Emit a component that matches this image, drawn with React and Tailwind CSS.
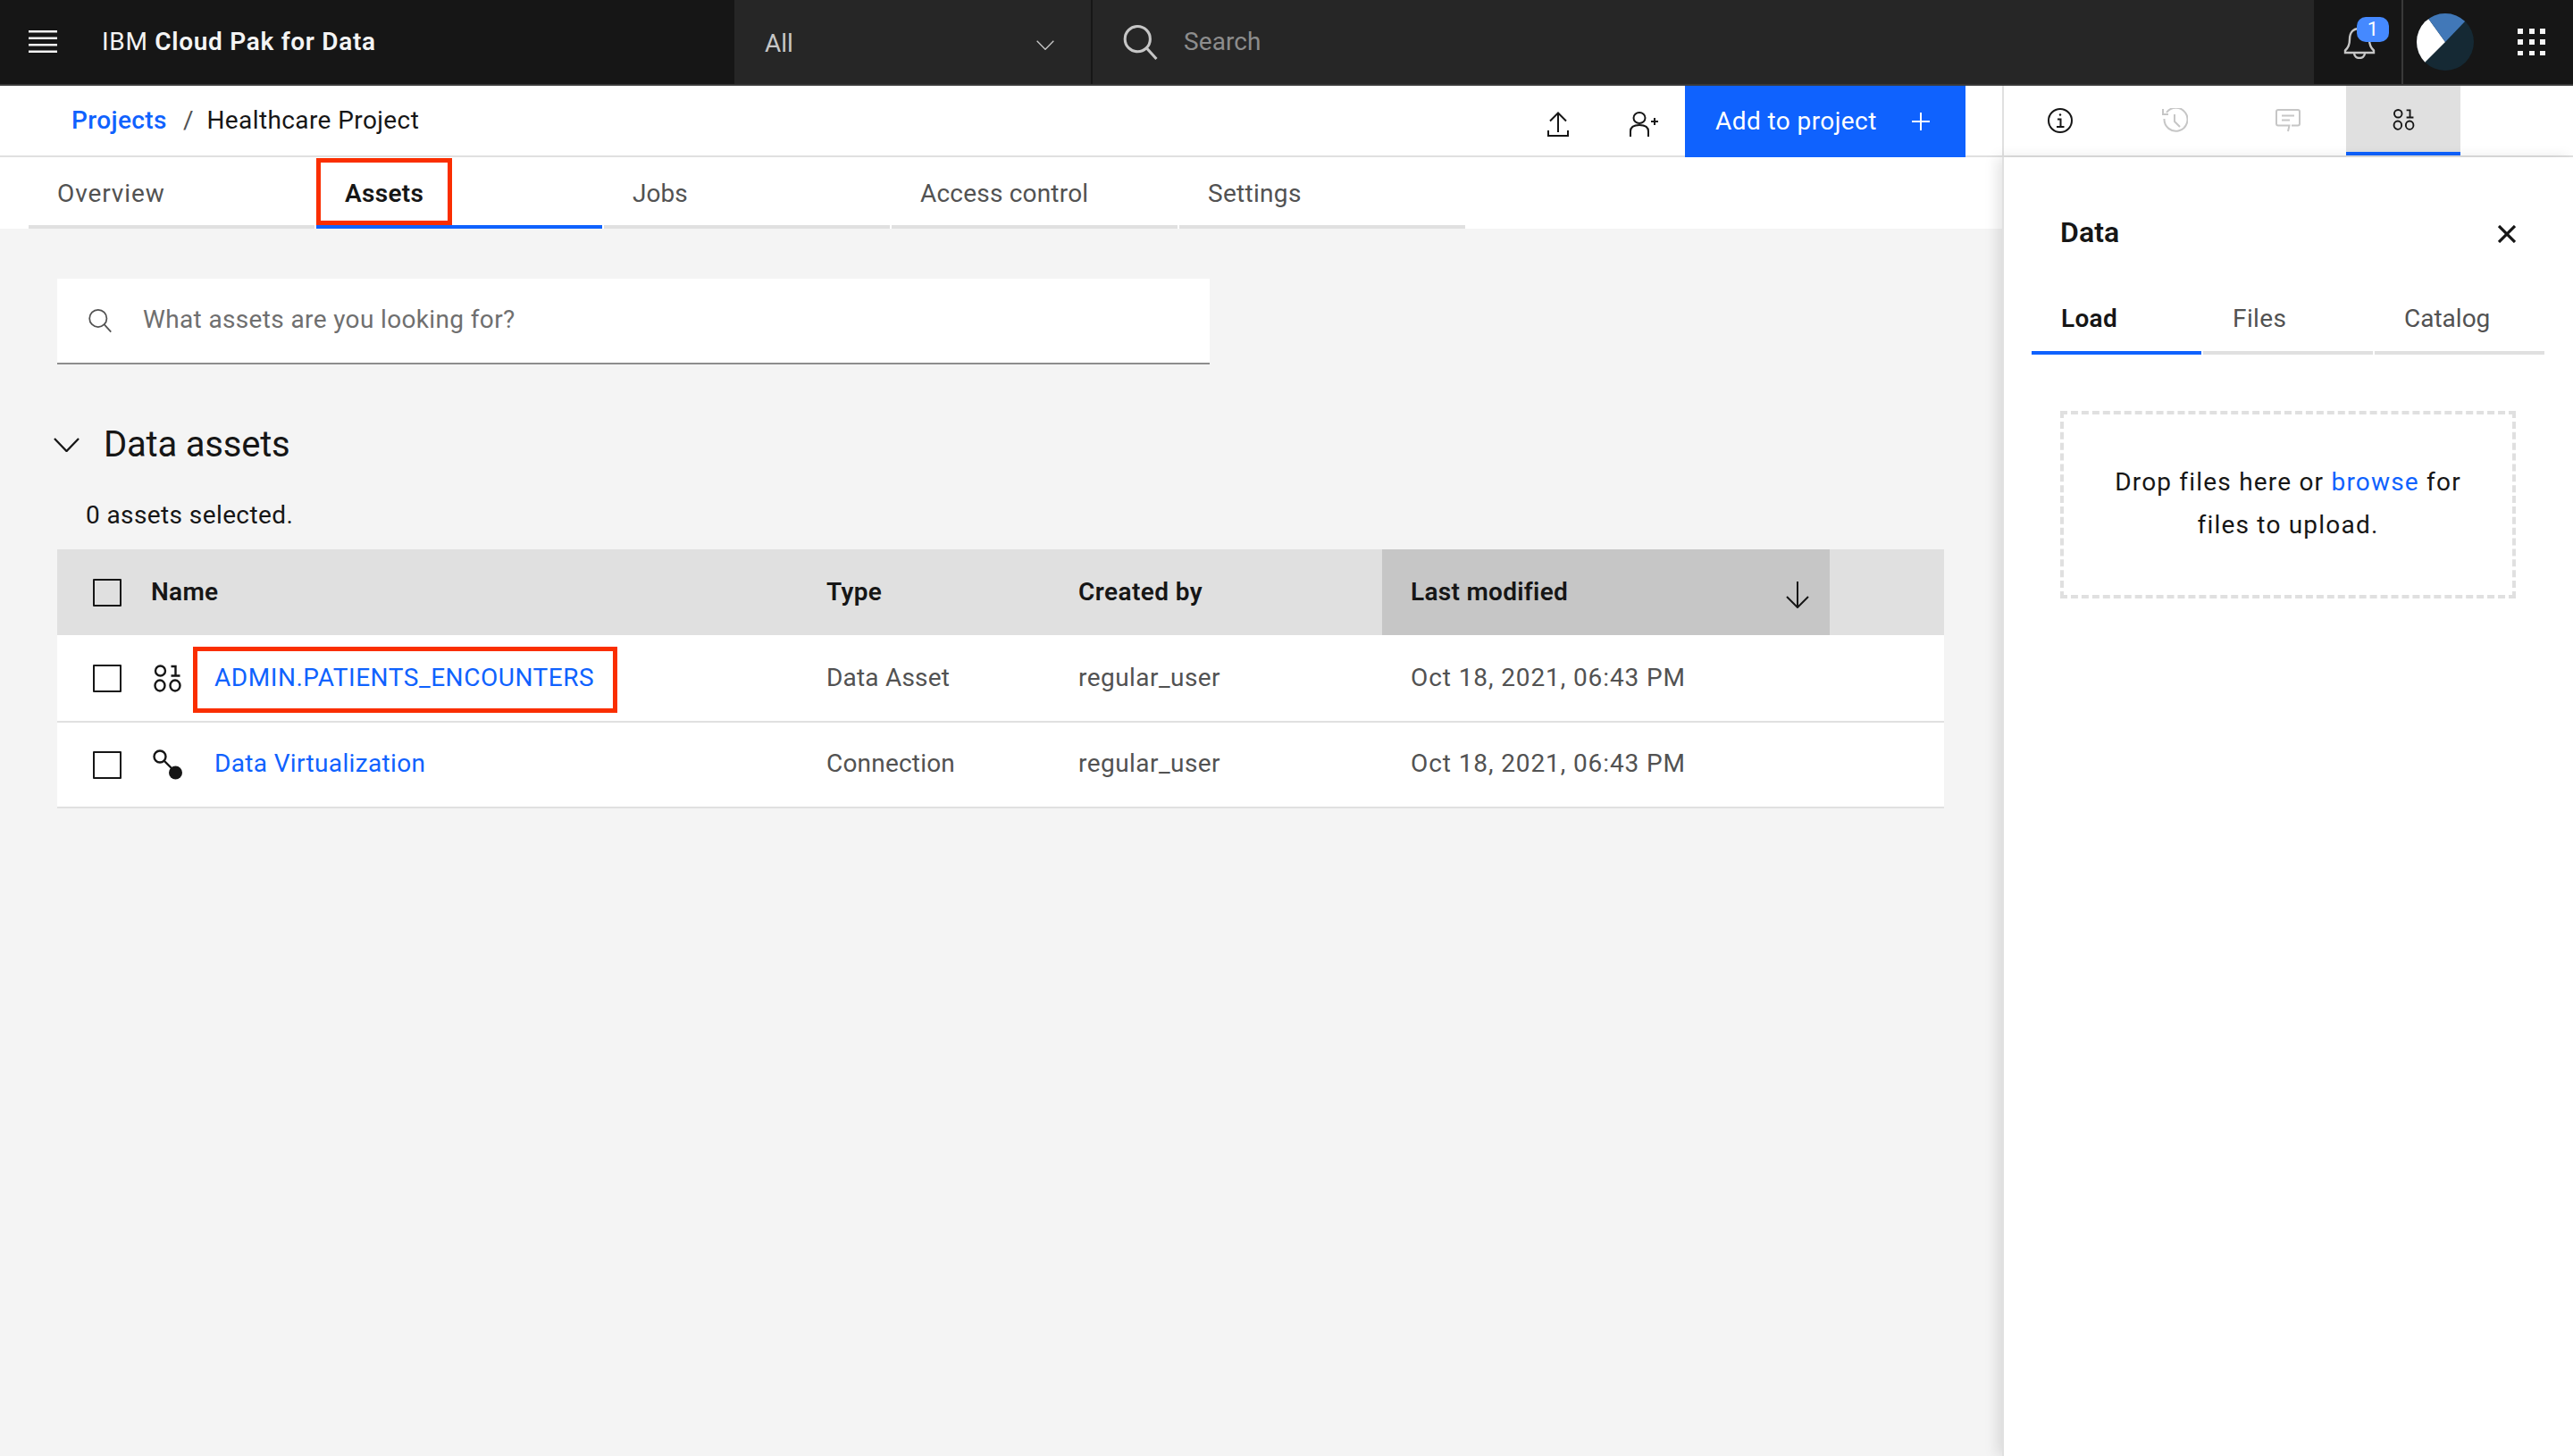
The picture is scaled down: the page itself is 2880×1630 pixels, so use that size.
import React from "react";

const Hamburger = () => (
  <svg width="32" height="26" viewBox="0 0 32 26" className="block" fill="#f4f4f4">
    <rect x="0" y="0" width="32" height="2.5" />
    <rect x="0" y="7.5" width="32" height="2.5" />
    <rect x="0" y="15" width="32" height="2.5" />
    <rect x="0" y="22.5" width="32" height="2.5" />
  </svg>
);

const Search = ({ size, color, sw }) => (
  <svg width={size} height={size} viewBox="0 0 32 32" fill="none" stroke={color} strokeWidth={sw} className="block">
    <circle cx="13.5" cy="13" r="11" />
    <line x1="21.5" y1="21" x2="30" y2="30.5" />
  </svg>
);

const Chevron = ({ w, h, color, sw }) => (
  <svg width={w} height={h} viewBox="0 0 30 16" preserveAspectRatio="none" fill="none" stroke={color} strokeWidth={sw} className="block">
    <path d="M1 1 L15 15 L29 1" />
  </svg>
);

const Bell = () => (
  <svg width="36" height="36" viewBox="0 0 36 36" fill="none" stroke="#c6c6c6" strokeWidth="2.4" className="block">
    <path d="M2 26.5 C6 23 7 20 7 14 C7 6 11 2 18 2 C25 2 29 6 29 14 C29 20 30 23 34 26.5 L34 29 L2 29 Z" />
    <path d="M12 29 C12 37 24 37 24 29" />
  </svg>
);

const Avatar = () => (
  <svg width="64" height="64" viewBox="0 0 64 64" className="block">
    <defs>
      <clipPath id="avatarClip">
        <circle cx="32" cy="32" r="32" />
      </clipPath>
    </defs>
    <g clipPath="url(#avatarClip)">
      <rect width="64" height="64" fill="#152934" />
      <polygon points="32,32 6,-4 -4,-4 -4,64 1,64 10,54" fill="#ffffff" />
      <polygon points="32,32 55,8 60,-4 6,-4 6,-4" fill="#4178b8" />
    </g>
  </svg>
);

const AppGrid = () => (
  <svg width="32" height="30" viewBox="0 0 32 30" fill="#f4f4f4" className="block">
    {[0, 13, 25].map((x) =>
      [0, 12, 25].map((y) => <rect key={`${x}-${y}`} x={x} y={y} width="6" height="6" />)
    )}
  </svg>
);

const Upload = () => (
  <svg width="24" height="28" viewBox="0 0 24 28" fill="none" stroke="#161616" strokeWidth="2" className="block">
    <path d="M12 23 V1.5 M3 10.5 L12 1.5 L21 10.5" />
    <path d="M1 21 V27 H23 V21" />
  </svg>
);

const PersonAdd = () => (
  <svg width="32" height="28" viewBox="0 0 32 28" fill="none" stroke="#161616" strokeWidth="2" className="block">
    <ellipse cx="11" cy="7" rx="6.5" ry="6" />
    <path d="M1 28 V22 C1 17 4 15 11 15 C18 15 21 17 21 22 V28" />
    <path d="M24 11 H32 M28 7 V15" />
  </svg>
);

const Plus = ({ size = 20 }) => (
  <svg width={size} height={size} viewBox="0 0 20 20" fill="none" stroke="#ffffff" strokeWidth="2" className="block">
    <path d="M10 0 V20 M0 10 H20" />
  </svg>
);

const Info = () => (
  <svg width="28" height="28" viewBox="0 0 28 28" fill="none" stroke="#161616" strokeWidth="2" className="block">
    <circle cx="14" cy="14" r="13" />
    <path d="M11 12.5 H14.5 V21 M10 21 H18.5" />
    <circle cx="14" cy="7.5" r="1.2" fill="#161616" stroke="none" />
  </svg>
);

const History = () => (
  <svg width="30" height="28" viewBox="0 0 30 28" fill="none" stroke="#c6c6c6" strokeWidth="2" className="block">
    <path d="M6 5 A13 13 0 1 1 3.5 12" />
    <path d="M2 1 V7 H8" />
    <path d="M15 7 V15 L21 21" />
  </svg>
);

const Chat = () => (
  <svg width="28" height="26" viewBox="0 0 28 26" fill="none" stroke="#c6c6c6" strokeWidth="2" className="block">
    <path d="M18 18.5 H25 A2 2 0 0 0 27 16.5 V3 A2 2 0 0 0 25 1 H3 A2 2 0 0 0 1 3 V16.5 A2 2 0 0 0 3 18.5 H15.5 L14 25" />
    <path d="M7 7.5 H21 M7 12.5 H16" />
  </svg>
);

const DataIcon = ({ w = 33, h = 32 }) => (
  <svg width={w} height={h} viewBox="0 0 32 32" fill="none" stroke="#161616" strokeWidth="2.4" className="block">
    <ellipse cx="8" cy="8" rx="5.5" ry="5.5" />
    <path d="M20 3 H25 V13 M20 13.5 H30" />
    <ellipse cx="7.5" cy="24.5" rx="5.5" ry="6" />
    <ellipse cx="24.5" cy="24.5" rx="5.5" ry="6" />
  </svg>
);

const ConnectionIcon = () => (
  <svg width="34" height="34" viewBox="0 0 34 34" fill="none" stroke="#161616" strokeWidth="2.4" className="block">
    <circle cx="8" cy="8" r="6.5" />
    <line x1="13" y1="13" x2="24" y2="24" />
    <circle cx="25.5" cy="26" r="7.5" fill="#161616" stroke="none" />
  </svg>
);

const ArrowDown = () => (
  <svg width="26" height="30" viewBox="0 0 26 30" fill="none" stroke="#161616" strokeWidth="2" className="block">
    <path d="M13 0 V28 M1 17 L13 29 L25 17" />
  </svg>
);

const Close = () => (
  <svg width="20" height="20" viewBox="0 0 20 20" fill="none" stroke="#161616" strokeWidth="3.2" className="block">
    <path d="M1 1 L19 19 M19 1 L1 19" />
  </svg>
);

const Checkbox = () => <span className="block h-[31px] w-[32px] border-2 border-[#161616] rounded-[1px]" />;

const RedBox = ({ className }) => (
  <span className={`absolute border-[5px] border-[#fa2e00] pointer-events-none ${className}`} />
);

const rowGrid = "grid grid-cols-[105px_756px_282px_340px_501px_128px] items-center";

const Row = ({ icon, name, nameTracking, type, boxed, heightClass, textShift }) => (
  <div className={`${rowGrid} relative bg-white ${heightClass} border-b-2 border-[#e0e0e0] text-[28px]`}>
    <div className="pl-[40px]">
      <Checkbox />
    </div>
    <div className="flex items-center relative">
      <span className="ml-[2px] w-[69px]">{icon}</span>
      <a className={`text-[#0f62fe] ${nameTracking} ${textShift}`}>{name}</a>
    </div>
    <div className={`text-[#525252] tracking-[0.2px] ${textShift}`}>{type}</div>
    <div className={`text-[#525252] tracking-[0.45px] ${textShift}`}>regular_user</div>
    <div className={`pl-[32px] text-[#525252] tracking-[0.9px] ${textShift}`}>Oct 18, 2021, 06:43 PM</div>
    <div />
    {boxed && <RedBox className="left-[152px] top-[13px] w-[475px] h-[74px]" />}
  </div>
);

const Tab = ({ label, active, tracking }) => (
  <div
    className={`w-[320px] h-[80px] border-b-4 flex items-center pl-[32px] pt-[5px] ${
      active ? "border-[#0f62fe] text-[#161616] font-semibold" : "border-[#e0e0e0] text-[#525252]"
    } ${tracking}`}
  >
    {label}
  </div>
);

const SideTab = ({ label, active, tracking }) => (
  <div
    className={`w-[190px] h-[76px] border-b-4 flex items-center pl-[33px] ${
      active ? "border-[#0f62fe] text-[#161616] font-semibold" : "border-[#e0e0e0] text-[#525252]"
    } ${tracking}`}
  >
    {label}
  </div>
);

export default function App() {
  return (
    <div className="flex flex-col h-[1630px] w-[2880px] overflow-hidden bg-[#f4f4f4] text-[28px] text-[#161616] font-['Roboto',sans-serif]">
      {/* Top bar */}
      <header className="flex h-[96px] shrink-0 border-b-2 border-[#393939] bg-[#161616]">
        <div className="w-[822px] flex items-center pl-[32px]">
          <Hamburger />
          <span className="ml-[50px] text-[#f4f4f4] tracking-[0.7px]">
            IBM <span className="font-semibold">Cloud Pak for Data</span>
          </span>
        </div>
        <div className="w-[399px] bg-[#262626] flex items-center justify-between pl-[34px] pr-[41px] text-[#c6c6c6]">
          <span className="mt-[3px]">All</span>
          <span className="mt-[7px]">
            <Chevron w={20} h={11} color="#c6c6c6" sw={2} />
          </span>
        </div>
        <div className="w-[2px] bg-[#161616]" />
        <div className="flex-1 bg-[#262626] flex items-center pl-[33px]">
          <Search size={41} color="#c6c6c6" sw={2.4} />
          <span className="ml-[28px] text-[#8d8d8d] tracking-[0.1px]">Search</span>
        </div>
        <div className="w-[290px] flex items-center">
          <div className="w-[98px] h-full relative flex items-center rounded-tl-[6px]">
            <span className="ml-[33px] mt-[2px]">
              <Bell />
            </span>
            <span className="absolute left-[48px] top-[19px] w-[36px] h-[28px] rounded-[10px] bg-[#4589ff] text-white text-[22px] leading-[28px] text-center">
              1
            </span>
          </div>
          <div className="w-[2px] h-full bg-[#393939]" />
          <div className="ml-[15px]">
            <Avatar />
          </div>
          <div className="ml-[49px]">
            <AppGrid />
          </div>
        </div>
      </header>

      {/* Breadcrumb row */}
      <div className="flex h-[80px] shrink-0 bg-white border-b-2 border-[#e0e0e0]">
        <div className="w-[2241px] flex items-center pl-[80px]">
          <a className="text-[#0f62fe] tracking-[0.4px] font-medium">Projects</a>
          <span className="ml-[18px] text-[#525252]">/</span>
          <span className="ml-[15px] tracking-[0.4px]">Healthcare Project</span>
          <div className="ml-auto flex items-center self-stretch">
            <span className="mt-[7px]">
              <Upload />
            </span>
            <span className="ml-[68px] mt-[7px]">
              <PersonAdd />
            </span>
            <button className="relative z-10 self-start ml-[30px] h-[80px] w-[314px] bg-[#0f62fe] flex items-center pl-[34px] text-white tracking-[0.42px]">
              Add to project
              <span className="ml-[39px]">
                <Plus />
              </span>
            </button>
            <div className="w-[41px]" />
          </div>
        </div>
        <div className="flex-1 border-l-2 border-[#e0e0e0] flex items-stretch">
          <div className="w-[127px] pl-[49px] flex items-center">
            <Info />
          </div>
          <div className="w-[128px] pl-[49px] flex items-center">
            <History />
          </div>
          <div className="w-[128px] pl-[49px] flex items-center">
            <Chat />
          </div>
          <div className="w-[128px] bg-[#e0e0e0] border-b-4 border-[#0f62fe] flex items-center justify-center">
            <DataIcon w={27} h={25} />
          </div>
        </div>
      </div>

      {/* Body */}
      <div className="flex flex-1 min-h-0">
        <main className="w-[2241px] flex flex-col">
          <div className="h-[80px] bg-white flex pl-[32px] gap-[2px] relative">
            <Tab label="Overview" tracking="tracking-[0.9px]" />
            <Tab label="Assets" active tracking="tracking-[0.3px]" />
            <Tab label="Jobs" tracking="tracking-[0px]" />
            <Tab label="Access control" tracking="tracking-[0.2px]" />
            <Tab label="Settings" tracking="tracking-[0.3px]" />
            <RedBox className="left-[354px] top-[1px] w-[152px] h-[75px]" />
          </div>

          <div className="pl-[64px] pr-[65px]">
            <div className="mt-[56px] w-[1290px] h-[96px] bg-white border-b-2 border-[#8d8d8d] flex items-center pl-[34px]">
              <Search size={28} color="#525252" sw={2} />
              <span className="ml-[34px] -mt-[2px] text-[#6f6f6f] tracking-[0.36px]">What assets are you looking for?</span>
            </div>

            <div className="mt-[64px] h-[52px] flex items-center -ml-[4px]">
              <Chevron w={29} h={16} color="#161616" sw={2.4} />
              <span className="ml-[27px] text-[40px] tracking-[-0.2px]">Data assets</span>
            </div>

            <div className="mt-[33px] pl-[32px] h-[40px] flex items-center tracking-[0.4px]">0 assets selected.</div>

            <div className="mt-[18px]">
              <div className={`${rowGrid} h-[96px] bg-[#e0e0e0] font-semibold`}>
                <div className="pl-[40px]">
                  <Checkbox />
                </div>
                <div className="tracking-[0.3px]">Name</div>
                <div className="tracking-[0.3px]">Type</div>
                <div className="tracking-[0.42px]">Created by</div>
                <div className="h-full bg-[#c6c6c6] flex items-center justify-between pl-[32px] pr-[23px] tracking-[0.3px]">
                  Last modified
                  <span className="mt-[6px]">
                    <ArrowDown />
                  </span>
                </div>
                <div />
              </div>
              <Row heightClass="h-[98px]" icon={<DataIcon />} name="ADMIN.PATIENTS_ENCOUNTERS" nameTracking="tracking-[0.55px]" type="Data Asset" boxed textShift="" />
              <Row heightClass="h-[96px]" icon={<ConnectionIcon />} name="Data Virtualization" nameTracking="tracking-[0.35px]" type="Connection" textShift="-mt-[2px]" />
            </div>
          </div>
        </main>

        <aside className="flex-1 bg-white border-l-2 border-[#e0e0e0] shadow-[-6px_0_14px_rgba(0,0,0,0.1)] relative">
          <div className="mt-[64px] h-[40px] flex items-center justify-between pl-[63px] pr-[64px]">
            <span className="text-[32px] font-semibold tracking-[0.1px]">Data</span>
            <span className="mt-[3px]">
              <Close />
            </span>
          </div>
          <div className="mt-[41px] ml-[31px] flex gap-[2px]">
            <SideTab label="Load" active tracking="tracking-[0.3px]" />
            <SideTab label="Files" tracking="tracking-[0.4px]" />
            <SideTab label="Catalog" tracking="tracking-[0px]" />
          </div>
          <div className="mt-[63px] ml-[63px] w-[510px] h-[210px] border-[4px] border-dashed border-[#e0e0e0] flex items-center justify-center text-center leading-[48px] tracking-[1.2px]">
            <p className="w-[430px] -mt-[3px]">
              Drop files here or <a className="text-[#0f62fe]">browse</a> for files to upload.
            </p>
          </div>
        </aside>
      </div>
    </div>
  );
}
